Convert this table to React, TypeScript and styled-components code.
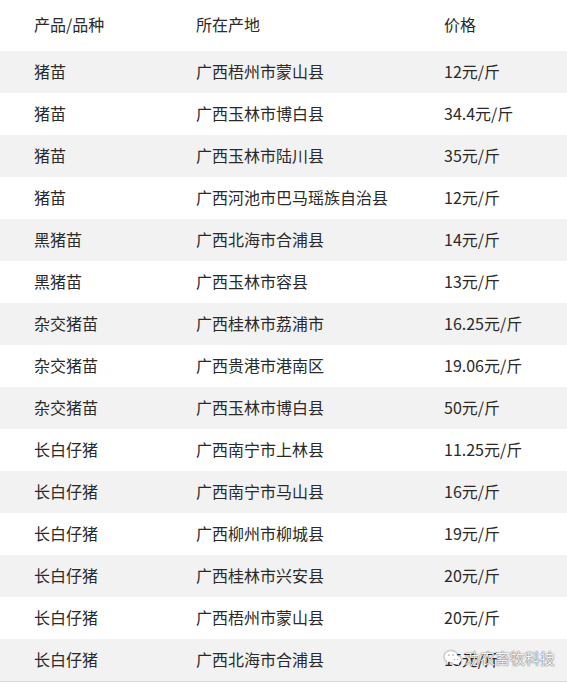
import React from "react";
import styled, { createGlobalStyle } from "styled-components";

const Global = createGlobalStyle`
  html, body { margin: 0; padding: 0; background: #fff; }
  body { font-family: "Noto Sans CJK SC", "Noto Sans", sans-serif; }
`;

const Page = styled.div`
  position: relative;
  width: 567px;
  height: 684px;
  overflow: hidden;
  background: #fff;
`;

const Table = styled.div`
  display: flex;
  flex-direction: column;
  border-bottom: 1px solid #dcdcdc;
`;

const Row = styled.div<{ $shade?: boolean; $h: number }>`
  display: grid;
  grid-template-columns: 162px 248px 1fr;
  align-items: center;
  box-sizing: border-box;
  height: ${(p) => p.$h}px;
  padding: 0 0 3px 34px;
  background: ${(p) => (p.$shade ? "#f2f2f2" : "#fff")};
  color: #2a2a2a;
  font-size: 16px;
  line-height: 20px;
`;

const Cell = styled.div`
  white-space: nowrap;
`;

const Watermark = styled.div`
  position: absolute;
  left: 444px;
  top: 648px;
  display: flex;
  align-items: center;
  gap: 3px;
  color: rgba(255, 255, 255, 0.95);
  font-size: 15px;
  line-height: 20px;
  text-shadow: 0 0 1px rgba(0, 0, 0, 0.7), 0 0 2px rgba(0, 0, 0, 0.35);
`;

const rows: [string, string, string][] = [
  ["猪苗", "广西梧州市蒙山县", "12元/斤"],
  ["猪苗", "广西玉林市博白县", "34.4元/斤"],
  ["猪苗", "广西玉林市陆川县", "35元/斤"],
  ["猪苗", "广西河池市巴马瑶族自治县", "12元/斤"],
  ["黑猪苗", "广西北海市合浦县", "14元/斤"],
  ["黑猪苗", "广西玉林市容县", "13元/斤"],
  ["杂交猪苗", "广西桂林市荔浦市", "16.25元/斤"],
  ["杂交猪苗", "广西贵港市港南区", "19.06元/斤"],
  ["杂交猪苗", "广西玉林市博白县", "50元/斤"],
  ["长白仔猪", "广西南宁市上林县", "11.25元/斤"],
  ["长白仔猪", "广西南宁市马山县", "16元/斤"],
  ["长白仔猪", "广西柳州市柳城县", "19元/斤"],
  ["长白仔猪", "广西桂林市兴安县", "20元/斤"],
  ["长白仔猪", "广西梧州市蒙山县", "20元/斤"],
  ["长白仔猪", "广西北海市合浦县", "15元/斤"],
];

const WeChatIcon = () => (
  <svg width="18" height="16" viewBox="0 0 18 16" style={{ filter: "drop-shadow(0 0 1px rgba(0,0,0,0.6))" }}>
    <ellipse cx="7" cy="6.5" rx="6.5" ry="5.5" fill="#fff" />
    <path d="M3 11 L2.5 13.5 L5.5 11.5 Z" fill="#fff" />
    <ellipse cx="12" cy="10" rx="5" ry="4.2" fill="#fff" />
    <path d="M14.5 13.5 L15.5 15.5 L12.5 14 Z" fill="#fff" />
    <circle cx="5" cy="5" r="0.8" fill="#999" />
    <circle cx="9" cy="5" r="0.8" fill="#999" />
    <circle cx="10.5" cy="9.5" r="0.6" fill="#999" />
    <circle cx="13.5" cy="9.5" r="0.6" fill="#999" />
  </svg>
);

export default function App() {
  return (
    <Page>
      <Global />
      <Table>
        <Row $h={51}>
          <Cell>产品/品种</Cell>
          <Cell>所在产地</Cell>
          <Cell>价格</Cell>
        </Row>
        {rows.map((r, i) => (
          <Row key={i} $h={42} $shade={i % 2 === 0}>
            <Cell>{r[0]}</Cell>
            <Cell>{r[1]}</Cell>
            <Cell>{r[2]}</Cell>
          </Row>
        ))}
      </Table>
      <Watermark>
        <WeChatIcon />
        <span>劝农畜牧科技</span>
      </Watermark>
    </Page>
  );
}
